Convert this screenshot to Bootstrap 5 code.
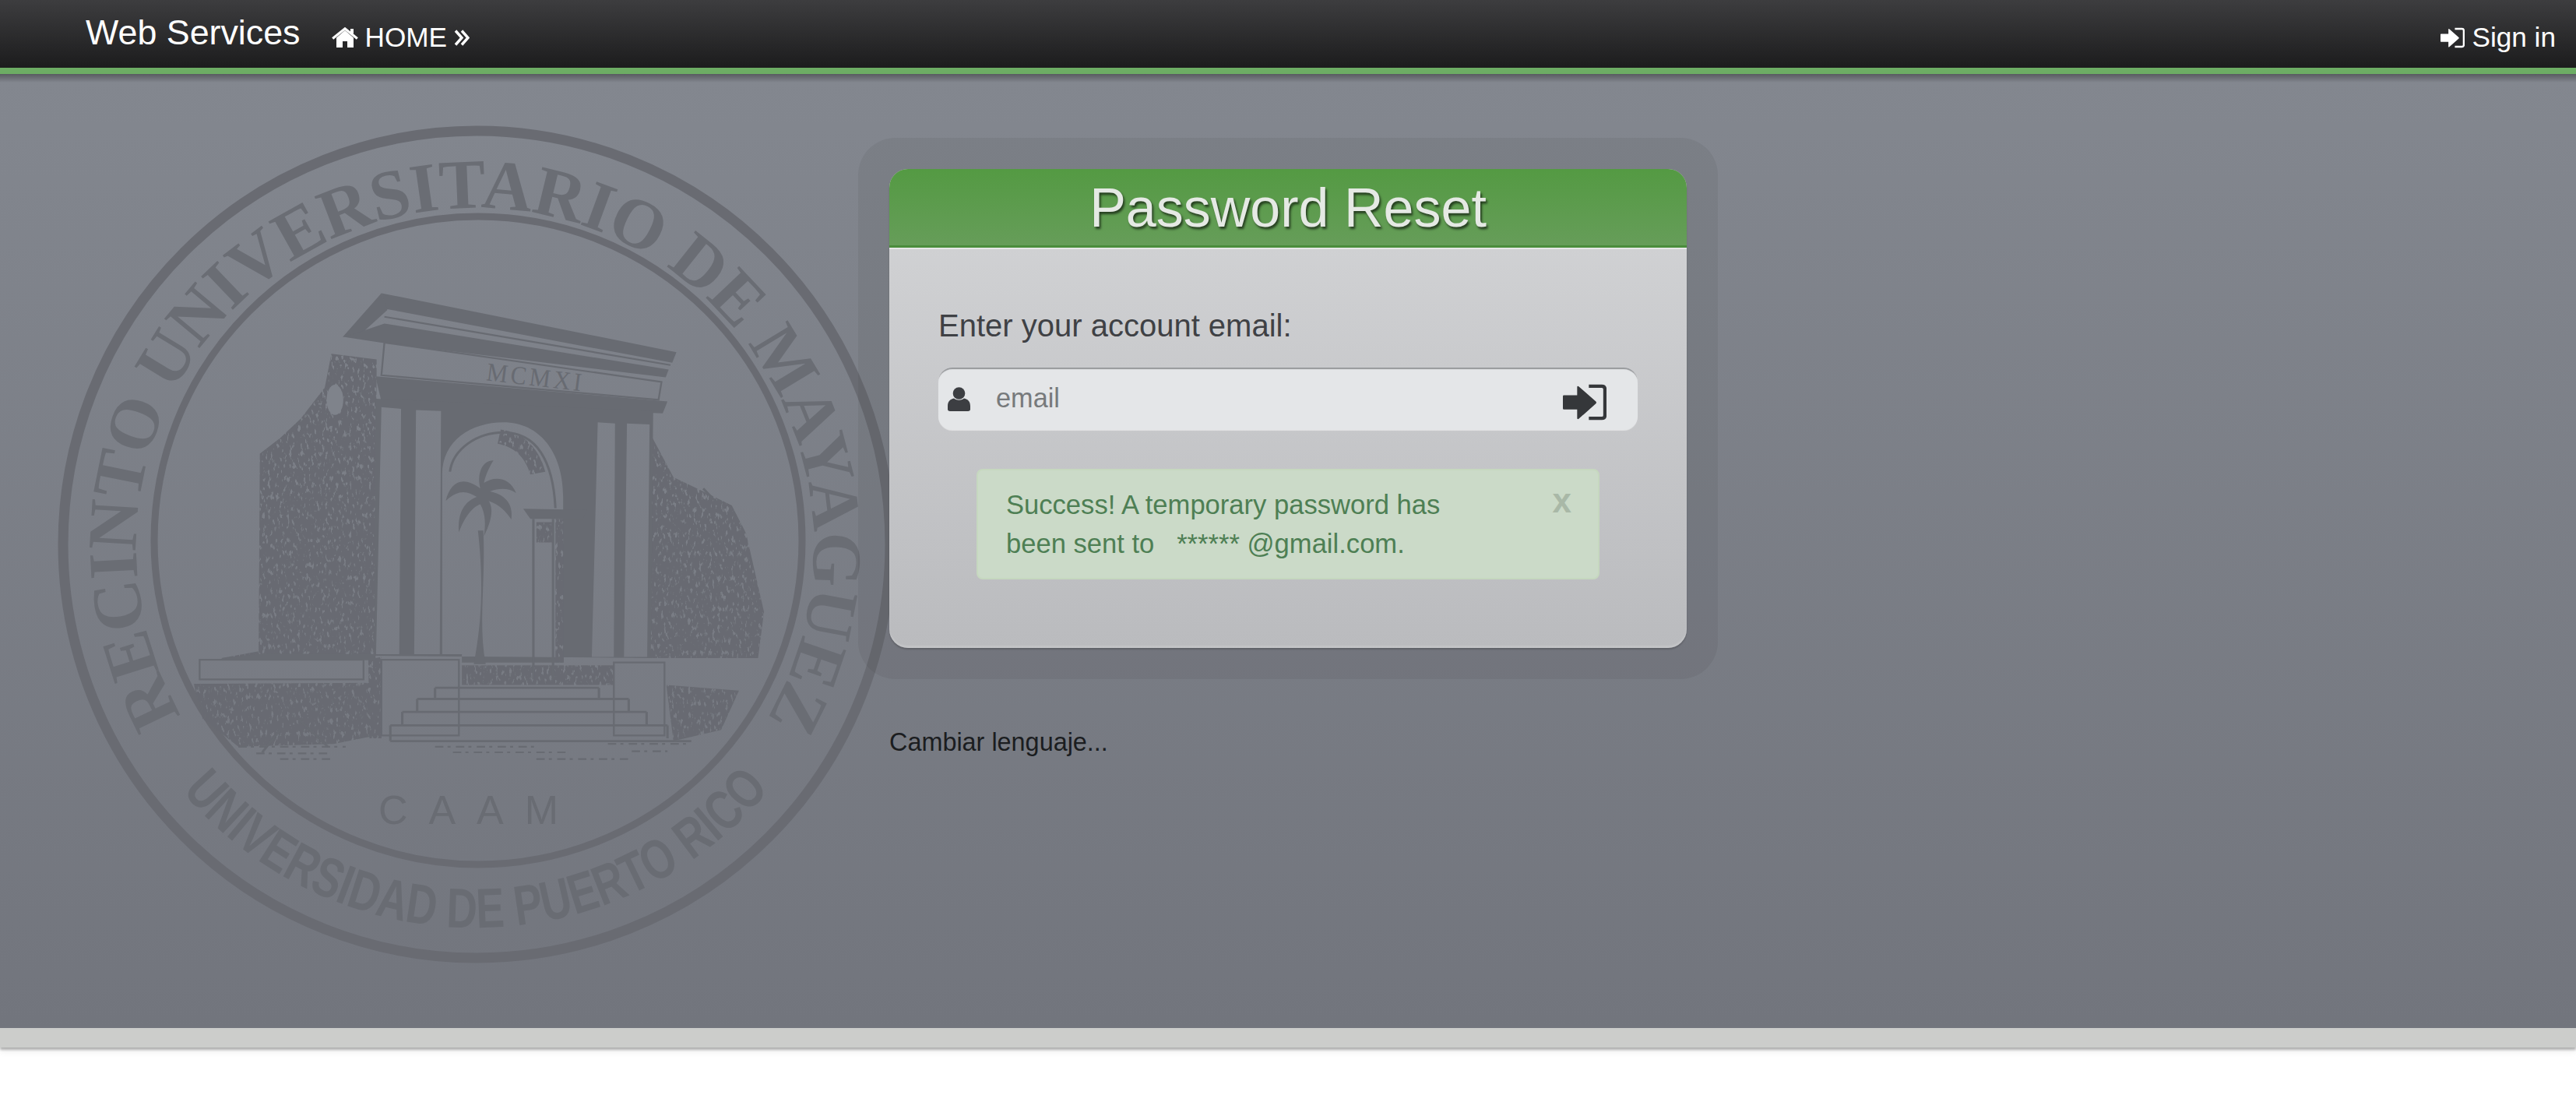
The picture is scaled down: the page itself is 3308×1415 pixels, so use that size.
<!DOCTYPE html>
<html lang="en">
<head>
<meta charset="utf-8">
<title>Password Reset</title>
<link href="https://cdn.jsdelivr.net/npm/bootstrap@5.3.0/dist/css/bootstrap.min.css" rel="stylesheet">
<style>
html,body{height:1415px;overflow:hidden;background:#fff;font-family:"Liberation Sans",Arial,sans-serif}
.top-bar{height:95px;padding:0 26px 0 110px;background:linear-gradient(#3d3d3f,#1c1c1d);border-bottom:8px solid #6dad64;flex-wrap:nowrap;align-items:flex-start}
.top-brand{font-size:44.8px;line-height:52px;margin:15px 40px 0 0;padding:0;color:#fff}
.top-link{font-size:35.2px;line-height:40px;margin-top:28px;padding:0;color:#fff;display:flex;align-items:center;gap:9px}
.top-link:hover,.top-brand:hover{color:#fff}
.stage{height:1225px;position:relative;overflow:hidden;background:linear-gradient(rgba(30,30,32,.42),rgba(30,30,32,0)) 0 0/100% 11px no-repeat,linear-gradient(#83878f,#72757d)}
.seal{position:absolute;left:0;top:0;width:1200px;height:1225px}
.reset-col{position:relative;width:1104px;margin:82px auto 0}
.halo{padding:40px;border-radius:48px;background:rgba(40,40,45,.075)}
.reset-card{border:0;border-radius:24px;overflow:hidden;background:linear-gradient(#d4d5d7,#babbbe);box-shadow:0 2px 2px rgba(0,0,0,.18),inset 0 -3px 2px rgba(255,255,255,.14)}
.reset-head{height:101px;padding:0;background:linear-gradient(#549a43,#669d59);border:0;border-bottom:3px solid #4a8d3c;border-radius:0!important;box-shadow:0 2px 0 #e6e7e7;text-align:center;color:#e5e9e4;font-size:70px;line-height:100px;text-shadow:2px 3px 3px rgba(0,0,0,.6)}
.reset-body{padding:74px 63px 88px}
.reset-label{font-size:40px;line-height:52px;color:#3f4145;margin:0 0 28px}
.mail-box{height:80px;border-radius:18px;background:#e4e6e8;box-shadow:inset 0 3px 1px -1px #96989b,0 1px 1px rgba(255,255,255,.5);padding:0 40px 0 12px;gap:33px}
.mail-input{border:0;padding:0;font-size:34.3px;color:#333;box-shadow:none!important;height:60px;background:none!important;margin-top:-2px}
.mail-input::placeholder{color:#777a7c;opacity:1}
.mail-go{border:0;background:none;padding:0;line-height:0;margin-top:8px}
.sent-note{margin:50px 49px 0;padding:20px 36px 19px;border:2px solid #c6d8bf;border-radius:8px;background:#cbdac8;color:#4e7f54;font-size:34.6px;line-height:49.5px;position:relative}
.note-x{position:absolute;right:34px;top:14px;font-weight:700;font-size:44px;line-height:50px;color:#a9b8a7;border:0;background:none;padding:0}
.lang-link{display:block;margin:61px 0 0 40px;font-size:32.4px;line-height:40px;color:#1b1d20;text-decoration:none}
.page-foot{height:25px;background:#cccdcb;box-shadow:0 3px 3px rgba(0,0,0,.28),0 6px 8px rgba(0,0,0,.06)}
</style>
</head>
<body>
<nav class="navbar top-bar d-flex justify-content-between">
  <div class="d-flex">
    <a class="navbar-brand top-brand" href="#">Web Services</a>
    <a class="nav-link top-link" href="#">
      <svg width="34" height="26" viewBox="0 0 34 26"><path fill="#fff" d="M6 13.500 17 4l11 9.500V26H20v-8h-6v8H6z"/><path fill="none" stroke="#fff" stroke-width="3.200" d="M1.200 14.500 17 1.800l15.800 12.700"/><path fill="#fff" d="M24 2h4v6h-4z"/></svg>
      <span>HOME</span>
      <svg width="20" height="21" viewBox="0 0 20 21"><path fill="none" stroke="#fff" stroke-width="3.400" d="M2 1.500 10 10.500 2 19.500M10 1.500 18 10.500 10 19.500"/></svg>
    </a>
  </div>
  <a class="nav-link top-link" href="#">
    <svg width="31" height="27" viewBox="0 0 168 140"><path fill="#fff" d="M4 43H55V12q0-7 6-3l66 58q4 4 0 8L61 134q-6 4-6-3V98H4q-4 0-4-4V47q0-4 4-4z"/><path fill="none" stroke="#fff" stroke-width="13" d="M100 8H150q12 0 12 12V120q0 12-12 12H100"/></svg>
    <span>Sign in</span>
  </a>
</nav>

<main class="stage">
  <svg class="seal" viewBox="0 95 1200 1225" aria-hidden="true">
    <defs>
      <filter id="scrub" x="0" y="0" width="100%" height="100%">
        <feTurbulence type="fractalNoise" baseFrequency=".22 .09" numOctaves="3" seed="7" result="n"/>
        <feColorMatrix in="n" type="matrix" values="0 0 0 0 0 0 0 0 0 0 0 0 0 0 0 8 0 0 0 -2.300" result="m"/>
        <feComposite in="SourceGraphic" in2="m" operator="in"/>
      </filter>
      <path id="ringTop" d="M233 919A435 435 0 1 1 987 919"/>
      <path id="ringBot" d="M234 1016A491 491 0 0 0 986 1016"/>
    </defs>
    <g fill="none" stroke="#696b72">
      <circle cx="612" cy="699" r="531" stroke-width="13"/>
      <circle cx="614" cy="694" r="416" stroke-width="9"/>
    </g>
    <text font-family="Liberation Serif, serif" font-size="90" font-weight="700" fill="#6a6d74"><textPath href="#ringTop" textLength="1826" lengthAdjust="spacing">RECINTO UNIVERSITARIO DE MAYAGUEZ</textPath></text>
    <text font-family="Liberation Sans, sans-serif" font-weight="700" font-size="72" fill="#696c73"><textPath href="#ringBot" textLength="860" lengthAdjust="spacingAndGlyphs">UNIVERSIDAD DE PUERTO RICO</textPath></text>
    <text x="615" y="1058" text-anchor="middle" fill="#696c73" font-family="Liberation Sans, sans-serif" font-size="52" letter-spacing="27">CAAM</text>

    <g transform="translate(0 130) scale(.7653 .7207)" fill="#686b72" stroke="none">
      <g filter="url(#scrub)">
        <path d="M556 450 L545 510 L505 565 L470 600 L436 628 L434 980 L372 992 L630 992 L632 460Z"/>
        <path d="M1090 590 L1105 620 L1130 670 L1180 695 L1228 720 L1252 770 L1282 910 L1272 992 L1090 992Z"/>
        <path d="M325 1038 L630 1036 L640 1128 L560 1145 L400 1150 L340 1100Z"/>
        <path d="M1118 1040 L1240 1050 L1210 1120 L1130 1140Z"/>
        <path d="M775 1005 L1030 1005 L1030 1040 L775 1040Z"/>
      </g>
      <ellipse cx="562" cy="532" rx="14" ry="27" fill="#7f838b"/>
      <path d="M640 342 1135 447 1128 466 648 370Z"/>
      <path d="M575 420 640 342 650 372 600 420Z"/>
      <path d="M578 420 645 396 1122 478 1117 492 640 430Z"/>
      <path d="M645 384 1125 470" stroke="#686b72" stroke-width="3" fill="none"/>
      <path d="M645 430 1110 500 1105 532 640 488Z" fill="none" stroke="#686b72" stroke-width="3"/>
      <path d="M630 490 1120 535 1112 556 640 535Z"/>
      <text transform="translate(815 497) rotate(7) scale(1 1.15)" font-family="Liberation Serif, serif" font-size="40" letter-spacing="5">MCMXI</text>
      <path fill-rule="evenodd" d="M630 530 1096 552 1092 992 628 988Z
        M640 545 673 548 670 985 631 985Z
        M698 550 740 552 738 985 695 985Z
        M742 985V665C742 605 790 572 845 572 905 572 945 625 945 705V1000H775V985Z
        M1003 572 1032 574 1030 990 993 990Z
        M1052 574 1090 576 1086 990 1047 990Z"/>
      <path d="M755 660C760 620 800 590 845 590 900 590 928 640 932 725" fill="none" stroke="#686b72" stroke-width="4"/>
      <path d="M840 585C880 590 905 620 915 660L890 665C880 630 860 615 835 610Z" filter="url(#scrub)"/>
      <path d="M878 726 985 728 978 744 890 744Z"/>
      <path d="M895 744V1030M928 744V1030" stroke="#686b72" stroke-width="4" fill="none"/>
      <path d="M900 750h28v36h-28ZM932 744h14v256h-14Z" filter="url(#scrub)"/>
      <path d="M802 765C812 860 808 930 795 1003H815C802 930 815 860 811 765Z"/>
      <path d="M806 690C775 665 755 680 748 712 770 690 785 695 800 705 775 715 768 740 770 768 782 735 795 722 806 718 815 735 815 755 812 775 826 745 828 725 820 712 838 718 850 732 858 745 862 715 845 700 822 695 840 688 855 690 866 698 855 668 828 668 812 680 815 665 822 650 828 640 808 640 800 665 806 690Z"/>
      <path d="M335 995H610V1030H335ZM640 995H770V1130H640ZM1030 1000H1115V1130H1030Z" fill="none" stroke="#686b72" stroke-width="3"/>
      <path d="M618 995 640 990V1135H620Z" filter="url(#scrub)"/>
      <path d="M372 992 440 984 630 985V996H372Z"/>
      <path d="M730 1045H1005M730 1045V1063M1005 1045V1063M700 1065H1055M700 1065V1087M1055 1065V1087M675 1088H1085M675 1088V1110M1085 1088V1110M655 1112H1120M655 1112V1140M1120 1112V1135M655 1140H1160" fill="none" stroke="#686b72" stroke-width="4"/>
      <path d="M400 1150h180M430 1162h120M470 1172h90M730 1150h170M760 1160h190M900 1172h160M1020 1145h140M1060 1158h60" stroke="#686b72" stroke-width="3" stroke-dasharray="14 7 5 9" fill="none"/>
      <path d="M500 1100 550 1150M470 1120 440 1160M1180 690 1200 712" stroke="#686b72" stroke-width="4" fill="none"/>
    </g>
  </svg>

  <div class="reset-col">
    <div class="halo">
      <div class="card reset-card">
        <div class="card-header reset-head">Password Reset</div>
        <div class="card-body reset-body">
          <p class="reset-label">Enter your account email:</p>
          <div class="mail-box d-flex align-items-center">
            <svg width="29" height="31" viewBox="0 0 29 31" class="flex-shrink-0"><circle cx="14.500" cy="8" r="7.800" fill="#3c3e42"/><path fill="#3c3e42" d="M8 14.500c4 3 9 3 13 0 5 1 8 4 8 10v4c0 1.500-1 2.500-3 2.500H3c-2 0-3-1-3-2.500v-4c0-6 3-9 8-10z"/></svg>
            <input class="form-control mail-input flex-grow-1" type="email" placeholder="email" aria-label="email">
            <button class="mail-go" type="button" aria-label="Send">
              <svg width="56" height="47" viewBox="0 0 168 140"><path fill="#35373a" d="M4 43H55V12q0-7 6-3l66 58q4 4 0 8L61 134q-6 4-6-3V98H4q-4 0-4-4V47q0-4 4-4z"/><path fill="none" stroke="#35373a" stroke-width="13" d="M100 8H150q12 0 12 12V120q0 12-12 12H100"/></svg>
            </button>
          </div>
          <div class="alert sent-note mb-0" role="alert">
            Success! A temporary password has<br>been sent to &nbsp; ****** @gmail.com.
            <button class="note-x" type="button" aria-label="Close">x</button>
          </div>
        </div>
      </div>
    </div>
    <a class="lang-link" href="#">Cambiar lenguaje...</a>
  </div>
</main>
<footer class="page-foot"></footer>
<script src="https://cdn.jsdelivr.net/npm/bootstrap@5.3.0/dist/js/bootstrap.bundle.min.js"></script>
</body>
</html>
